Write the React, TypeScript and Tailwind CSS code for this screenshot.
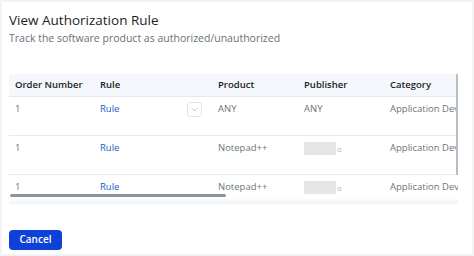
import { ChevronDown } from 'lucide-react';

interface RuleRow {
  order: string;
  rule: string;
  product: string;
  publisher: string | null;
  category: string;
  selectable?: boolean;
}

const rows: RuleRow[] = [
  { order: '1', rule: 'Rule', product: 'ANY', publisher: 'ANY', category: 'Application Development', selectable: true },
  { order: '1', rule: 'Rule', product: 'Notepad++', publisher: null, category: 'Application Development' },
  { order: '1', rule: 'Rule', product: 'Notepad++', publisher: null, category: 'Application Development' },
];

const cols = 'grid grid-cols-[91px_118px_86px_86px_140px]';

export default function App() {
  return (
    <div className="w-[474px] h-[256px] bg-[#f2f3f5] p-[2px] font-['Open_Sans',sans-serif]">
      <div className="h-full bg-white flex flex-col px-[7px] pt-[9px]">
        <h1 className="text-[13.5px] leading-[18px] text-[#1d1d1f]">View Authorization Rule</h1>
        <p className="text-[10.5px] leading-[16px] text-[#6b6f75] mt-[1px]">
          Track the software product as authorized/unauthorized
        </p>

        <div className="relative mt-[28px] h-[130px] w-[449px] overflow-hidden">
          <div className="w-[521px]">
            <div className={`${cols} h-[23px] items-center bg-[#f4f7fc] border-b border-[#e4e9f1] text-[9.5px] font-semibold text-[#222]`}>
              <div className="pl-[6px]">Order Number</div>
              <div>Rule</div>
              <div>Product</div>
              <div>Publisher</div>
              <div className="whitespace-nowrap">Category</div>
            </div>
            {rows.map((r, i) => (
              <div
                key={i}
                className={`${cols} h-[39px] pt-[4px] text-[9.5px] leading-[16px] text-[#6f7378] ${i < rows.length - 1 ? 'border-b border-[#e6e9ee]' : ''}`}
              >
                <div className="pl-[6px]">{r.order}</div>
                <div className="flex items-start justify-between pr-[16px]">
                  <a className="text-[#2160c0]">{r.rule}</a>
                  {r.selectable && (
                    <span className="mt-[1px] w-[15px] h-[15px] rounded-[3px] border border-[#dfe3ea] flex items-center justify-center">
                      <ChevronDown size={11} strokeWidth={1.5} className="text-[#9aa9c6]" />
                    </span>
                  )}
                </div>
                <div>{r.product}</div>
                <div>
                  {r.publisher ? (
                    r.publisher
                  ) : (
                    <span className="flex items-center mt-[2px]">
                      <span className="w-[32px] h-[13px] bg-[#e6e6e6]" />
                      <span className="text-[8px] leading-[10px] text-[#b0b0b0] ml-[1px]">o</span>
                    </span>
                  )}
                </div>
                <div className="whitespace-nowrap">{r.category}</div>
              </div>
            ))}
          </div>
          <div className="absolute right-[0px] top-[0px] w-[2px] h-[101px] bg-[#b7bec7]" />
          <div className="absolute left-[1px] top-[120px] w-[216px] h-[3px] rounded-full bg-[#8d949c]" />
          <div className="absolute left-0 bottom-0 w-full h-[6px] bg-gradient-to-b from-white to-[#f1f2f4]" />
        </div>

        <div className="mt-[21px]">
          <button className="w-[53px] h-[20px] rounded-[4px] bg-[#0d41d8] text-white text-[10px] font-semibold">
            Cancel
          </button>
        </div>
      </div>
    </div>
  );
}
